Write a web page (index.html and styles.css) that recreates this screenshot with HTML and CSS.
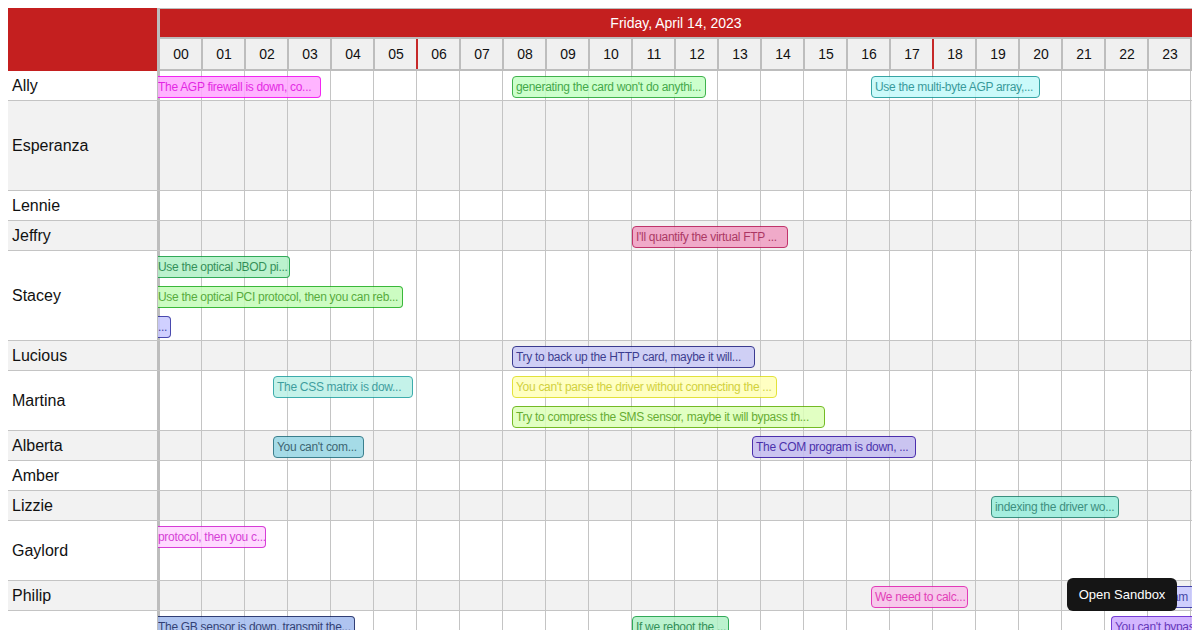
FILE: index.html
```html
<!DOCTYPE html>
<html>
<head>
<meta charset="utf-8">
<link rel="stylesheet" href="styles.css">
</head>
<body>
<div class="scheduler">
  <div class="head">
    <div class="corner"></div>
    <div class="head-time">
      <div class="date">Friday, April 14, 2023</div>
      <div class="hours">
        <div class="hour">00</div><div class="hour">01</div><div class="hour">02</div><div class="hour">03</div>
        <div class="hour">04</div><div class="hour mark">05</div><div class="hour">06</div><div class="hour">07</div>
        <div class="hour">08</div><div class="hour">09</div><div class="hour">10</div><div class="hour">11</div>
        <div class="hour">12</div><div class="hour">13</div><div class="hour">14</div><div class="hour">15</div>
        <div class="hour">16</div><div class="hour mark">17</div><div class="hour">18</div><div class="hour">19</div>
        <div class="hour">20</div><div class="hour">21</div><div class="hour">22</div><div class="hour">23</div>
      </div>
    </div>
  </div>

  <div class="row h1">
    <div class="name">Ally</div>
    <div class="lanes">
      <div class="ev l0 cut c-magenta" style="left:-2px;width:163px">The AGP firewall is down, co...</div>
      <div class="ev l0 c-green" style="left:352px;width:194px">generating the card won't do anythi...</div>
      <div class="ev l0 c-cyan" style="left:711px;width:169px">Use the multi-byte AGP array,...</div>
    </div>
  </div>
  <div class="row h3 alt">
    <div class="name">Esperanza</div>
    <div class="lanes"></div>
  </div>
  <div class="row h1">
    <div class="name">Lennie</div>
    <div class="lanes"></div>
  </div>
  <div class="row h1 alt">
    <div class="name">Jeffry</div>
    <div class="lanes">
      <div class="ev l0 c-crimson" style="left:472px;width:156px">I'll quantify the virtual FTP ...</div>
    </div>
  </div>
  <div class="row h3">
    <div class="name">Stacey</div>
    <div class="lanes">
      <div class="ev l0 cut c-mint" style="left:-2px;width:132px">Use the optical JBOD pi...</div>
      <div class="ev l1 cut c-lime" style="left:-2px;width:245px">Use the optical PCI protocol, then you can reb...</div>
      <div class="ev l2 cut c-lavender" style="left:-2px;width:13px">...</div>
    </div>
  </div>
  <div class="row h1 alt">
    <div class="name">Lucious</div>
    <div class="lanes">
      <div class="ev l0 c-indigo" style="left:352px;width:243px">Try to back up the HTTP card, maybe it will...</div>
    </div>
  </div>
  <div class="row h2">
    <div class="name">Martina</div>
    <div class="lanes">
      <div class="ev l0 c-teal" style="left:113px;width:140px">The CSS matrix is dow...</div>
      <div class="ev l0 c-yellow" style="left:352px;width:265px">You can't parse the driver without connecting the ...</div>
      <div class="ev l1 c-yellowgreen" style="left:352px;width:313px">Try to compress the SMS sensor, maybe it will bypass th...</div>
    </div>
  </div>
  <div class="row h1 alt">
    <div class="name">Alberta</div>
    <div class="lanes">
      <div class="ev l0 c-sky" style="left:113px;width:91px">You can't com...</div>
      <div class="ev l0 c-violet" style="left:592px;width:164px">The COM program is down, ...</div>
    </div>
  </div>
  <div class="row h1">
    <div class="name">Amber</div>
    <div class="lanes"></div>
  </div>
  <div class="row h1 alt">
    <div class="name">Lizzie</div>
    <div class="lanes">
      <div class="ev l0 c-aqua" style="left:831px;width:128px">indexing the driver wo...</div>
    </div>
  </div>
  <div class="row h2">
    <div class="name">Gaylord</div>
    <div class="lanes">
      <div class="ev l0 cut c-orchid" style="left:-2px;width:108px">protocol, then you c...</div>
    </div>
  </div>
  <div class="row h1 alt">
    <div class="name">Philip</div>
    <div class="lanes">
      <div class="ev l0 c-pink" style="left:711px;width:97px">We need to calc...</div>
      <div class="ev l0 cutr c-lavender" style="left:950px;width:82px">Try to program</div>
    </div>
  </div>
  <div class="row h3">
    <div class="name">Bettie</div>
    <div class="lanes">
      <div class="ev l0 cut c-blue" style="left:-2px;width:197px">The GB sensor is down, transmit the...</div>
      <div class="ev l0 c-mint" style="left:472px;width:97px">If we reboot the ...</div>
      <div class="ev l0 cutr c-purple" style="left:951px;width:81px">You can't bypass the...</div>
    </div>
  </div>
</div>
<div class="sandbox">Open Sandbox</div>
</body>
</html>
```
FILE: styles.css
```css
html, body {
  overflow: hidden;
  height: 100%;
}
body {
  margin: 8px;
  font-family: "Liberation Sans", Arial, sans-serif;
  color: #111;
  background: #fff;
}
.scheduler {
  width: 1184px;
}
.head {
  display: flex;
}
.corner {
  width: 149px;
  height: 63px;
  background: #c41f1f;
  border-right: 3px solid #bdbdbd;
}
.head-time {
  width: 1032px;
  border-top: 1px solid #bdbdbd;
}
.date {
  height: 28px;
  line-height: 28px;
  background: #c41f1f;
  color: #fff;
  text-align: center;
  font-size: 14px;
  border-bottom: 2px solid #bdbdbd;
}
.hours {
  display: flex;
  height: 30px;
  border-bottom: 2px solid #bdbdbd;
}
.hour {
  box-sizing: border-box;
  width: 43px;
  flex: none;
  background: #f0f0f0;
  border-right: 2px solid #bdbdbd;
  text-align: center;
  line-height: 30px;
  font-size: 14px;
  padding-left: 1px;
}
.hour.mark {
  border-right-color: #c62828;
}
.row {
  display: flex;
  box-sizing: border-box;
  border-bottom: 1px solid #c4c4c4;
  background: #fff;
}
.row.alt {
  background: #f2f2f2;
}
.row.h1 { height: 30px; }
.row.h2 { height: 60px; }
.row.h3 { height: 90px; }
.name {
  width: 145px;
  padding-left: 4px;
  border-right: 3px solid #bdbdbd;
  display: flex;
  align-items: center;
  font-size: 16px;
  color: #111;
}
.lanes {
  position: relative;
  width: 1032px;
  background-image: linear-gradient(to right, transparent 41px, #c4c4c4 41px, #c4c4c4 42px, transparent 42px);
  background-size: 43px 100%;
}
.ev {
  position: absolute;
  box-sizing: border-box;
  height: 22px;
  border: 1px solid;
  border-radius: 4px;
  padding: 0 0 0 3px;
  font-size: 12px;
  letter-spacing: -0.3px;
  line-height: 20px;
  white-space: nowrap;
  overflow: hidden;
  opacity: 0.85;
  z-index: 2;
}
.ev.cut {
  border-left-width: 0;
  border-top-left-radius: 0;
  border-bottom-left-radius: 0;
  padding-left: 0;
}
.ev.cutr {
  border-right-width: 0;
  border-top-right-radius: 0;
  border-bottom-right-radius: 0;
}
.l0 { top: 5px; }
.l1 { top: 35px; }
.l2 { top: 65px; }

.c-magenta { background: #ffa8ff; border-color: #f000f0; color: #e000e0; }
.c-green { background: #c4ffc4; border-color: #1fa52f; color: #1f9a2a; }
.c-cyan { background: #c2fafa; border-color: #149696; color: #148a8a; }
.c-crimson { background: #f09ec2; border-color: #b81454; color: #a0164c; }
.c-mint { background: #b0f0c6; border-color: #0e9c3c; color: #0e7e3c; }
.c-lime { background: #c4fcb8; border-color: #18ac18; color: #3a9e1a; }
.c-lavender { background: #c8c8ff; border-color: #2a2aa0; color: #2a2a9a; }
.c-indigo { background: #cacaf6; border-color: #1c1c80; color: #1c1c80; }
.c-teal { background: #baf0e6; border-color: #1c9e9e; color: #1a8e8e; }
.c-yellow { background: #ffffb8; border-color: #dede1a; color: #caca18; }
.c-yellowgreen { background: #dcffb8; border-color: #5cae00; color: #4ca00c; }
.c-sky { background: #98d8e6; border-color: #1c6c7c; color: #1c4e5c; }
.c-violet { background: #c4bcf0; border-color: #2e0ea0; color: #2e0ea0; }
.c-aqua { background: #98eedc; border-color: #1c7e6c; color: #1c7e6c; }
.c-orchid { background: #ffd4ff; border-color: #d01cd0; color: #d01cd0; }
.c-pink { background: #f8c2ea; border-color: #e01cae; color: #e01cae; }
.c-blue { background: #a2baee; border-color: #0e1e5e; color: #0e1e5e; }
.c-purple { background: #ccaaff; border-color: #5e1cd0; color: #4c14b0; }

.sandbox {
  position: fixed;
  right: 23px;
  bottom: 19px;
  width: 110px;
  height: 33px;
  display: flex;
  align-items: center;
  justify-content: center;
  background: #151515;
  color: #fff;
  border-radius: 6px;
  font-size: 13px;
  z-index: 10;
}
```
